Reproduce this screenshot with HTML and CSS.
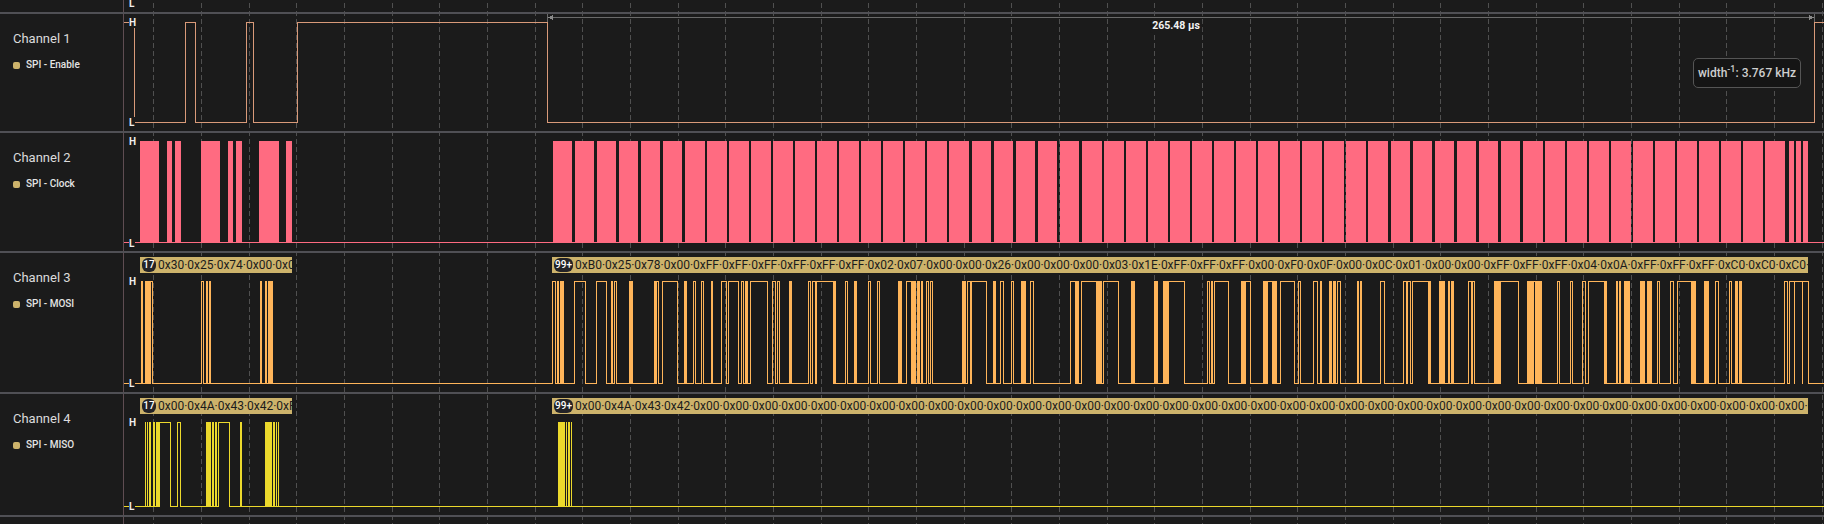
FILE: index.html
```html
<!DOCTYPE html>
<html lang="en">

<head>
  <meta charset="UTF-8">
  <meta name="viewport" content="width=device-width, initial-scale=1.0">
  <title>Logic capture - SPI</title>
  <link rel="stylesheet" href="styles.css">
</head>

<body>
  <div class="viewer">
    <div class="row strip">
      <div class="side"></div>
      <div class="plot"><span class="level strip-low">L</span></div>
    </div>

    <section class="row ch1">
      <div class="side">
        <div class="name">Channel 1</div>
        <div class="analyzer"><i class="dot"></i>SPI - Enable</div>
      </div>
      <div class="plot">
        <svg viewBox="124 14 1700 117" preserveAspectRatio="none">
          <path class="trace enable" d="M124 22.5H134.5V122.5H185.5V22.5H195.5V122.5H246.5V22.5H253.5V122.5H297.5V22.5H547.5V122.5H1814.5V22.5H1824" />
          <path class="span" d="M547.5 14V22M1814.5 14V22M548 17.5H1814" />
          <path class="span-head" d="M548 17.5L553 15V20ZM1814 17.5L1809 15V20Z" />
        </svg>
        <span class="level ch1-high">H</span>
        <span class="level ch1-low">L</span>
        <span class="span-label">265.48 µs</span>
        <div class="tooltip">width<sup>-1</sup>: 3.767 kHz</div>
      </div>
    </section>

    <section class="row ch2">
      <div class="side">
        <div class="name">Channel 2</div>
        <div class="analyzer"><i class="dot"></i>SPI - Clock</div>
      </div>
      <div class="plot">
        <svg viewBox="124 133 1700 118" preserveAspectRatio="none">
          <path class="trace clock" d="M124 242.5H1824" />
          <path class="bars clock-bars" d="M140 141H159V243H140ZM167 141H172V243H167ZM175 141H181V243H175ZM201 141H220V243H201ZM228 141H233V243H228ZM236 141H242V243H236ZM259 141H279V243H259ZM286 141H292V243H286Z
          M553 141H572V243H553ZM575 141H594V243H575ZM597 141H616V243H597ZM619 141H638V243H619ZM641 141H660V243H641ZM663 141H682V243H663ZM685 141H705V243H685ZM707 141H727V243H707ZM729 141H749V243H729ZM751 141H771V243H751ZM773 141H793V243H773ZM795 141H815V243H795ZM817 141H837V243H817ZM839 141H859V243H839ZM861 141H881V243H861ZM883 141H903V243H883ZM905 141H925V243H905ZM927 141H947V243H927ZM949 141H969V243H949Z
          M972 141H991V243H972ZM994 141H1013V243H994ZM1016 141H1035V243H1016ZM1038 141H1057V243H1038ZM1060 141H1079V243H1060ZM1082 141H1102V243H1082ZM1104 141H1124V243H1104ZM1126 141H1146V243H1126ZM1148 141H1168V243H1148ZM1170 141H1190V243H1170ZM1192 141H1212V243H1192ZM1214 141H1234V243H1214ZM1236 141H1256V243H1236ZM1258 141H1278V243H1258ZM1280 141H1300V243H1280ZM1302 141H1322V243H1302ZM1324 141H1344V243H1324ZM1346 141H1366V243H1346ZM1368 141H1388V243H1368Z
          M1391 141H1410V243H1391ZM1413 141H1432V243H1413ZM1435 141H1454V243H1435ZM1457 141H1476V243H1457ZM1479 141H1498V243H1479ZM1501 141H1520V243H1501ZM1523 141H1543V243H1523ZM1545 141H1565V243H1545ZM1567 141H1587V243H1567ZM1589 141H1609V243H1589ZM1611 141H1631V243H1611ZM1633 141H1653V243H1633ZM1655 141H1675V243H1655ZM1677 141H1697V243H1677ZM1699 141H1719V243H1699ZM1721 141H1741V243H1721ZM1743 141H1763V243H1743ZM1765 141H1785V243H1765ZM1789 141H1794V243H1789ZM1796 141H1801V243H1796ZM1803 141H1808V243H1803Z" />
        </svg>
        <span class="level ch2-high">H</span>
        <span class="level ch2-low">L</span>
      </div>
    </section>

    <section class="row ch3">
      <div class="side">
        <div class="name">Channel 3</div>
        <div class="analyzer"><i class="dot"></i>SPI - MOSI</div>
      </div>
      <div class="plot">
        <svg viewBox="124 253 1700 139" preserveAspectRatio="none">
          <path class="trace mosi" d="M124 383.5H150.5V281.5H152.5V383.5H201.5V281.5H203.5V383.5H206.5V281.5H207.5V383.5H209.5V281.5H210.5V383.5
          H552.5V281.5H555.5V383.5H574.5V281.5H585.5V383.5H596.5V281.5H606.5V383.5H611.5V281.5H612.5V383.5H614.5V281.5H616.5V383.5H654.5V281.5H655.5V383.5H656.5V281.5H658.5V383.5H662.5V281.5H677.5V383.5H693.5V281.5H695.5V383.5H701.5V281.5H703.5V383.5H711.5V281.5H712.5V383.5H721.5V281.5H726.5V383.5H728.5V281.5H738.5V383.5H741.5V281.5H743.5V383.5H750.5V281.5H767.5V383.5H772.5V281.5H775.5V383.5H777.5V281.5H779.5V383.5H808.5V281.5H810.5V383.5H812.5V281.5H815.5V383.5H816.5V281.5H833.5V383.5H845.5V281.5H847.5V383.5H868.5V281.5H870.5V383.5H877.5V281.5H879.5V383.5H906.5V281.5H911.5V383.5H926.5V281.5H928.5V383.5H930.5V281.5H932.5V383.5
          H967.5V281.5H970.5V383.5H971.5V281.5H986.5V383.5H1000.5V281.5H1003.5V383.5H1011.5V281.5H1013.5V383.5H1030.5V281.5H1033.5V383.5H1070.5V281.5H1075.5V383.5H1081.5V281.5H1096.5V383.5H1103.5V281.5H1118.5V383.5H1168.5V281.5H1184.5V383.5H1207.5V281.5H1209.5V383.5H1211.5V281.5H1212.5V383.5H1214.5V281.5H1228.5V383.5H1245.5V281.5H1250.5V383.5H1267.5V281.5H1272.5V383.5H1280.5V281.5H1294.5V383.5H1298.5V281.5H1300.5V383.5H1313.5V281.5H1317.5V383.5H1320.5V281.5H1321.5V383.5H1337.5V281.5H1340.5V383.5H1357.5V281.5H1358.5V383.5H1360.5V281.5H1361.5V383.5H1380.5V281.5H1384.5V383.5
          H1403.5V281.5H1406.5V383.5H1407.5V281.5H1410.5V383.5H1412.5V281.5H1428.5V383.5H1468.5V281.5H1471.5V383.5H1472.5V281.5H1474.5V383.5H1500.5V281.5H1518.5V383.5H1533.5V281.5H1535.5V383.5H1557.5V281.5H1559.5V383.5H1570.5V281.5H1572.5V383.5H1582.5V281.5H1585.5V383.5H1588.5V281.5H1604.5V383.5H1657.5V281.5H1659.5V383.5H1670.5V281.5H1673.5V383.5H1677.5V281.5H1691.5V383.5H1715.5V281.5H1718.5V383.5H1729.5V281.5H1731.5V383.5H1784.5V281.5H1787.5V383.5H1789.5V281.5H1808.5V383.5H1824M1794.5 281.5V383.5M1802.5 281.5V383.5" />
          <path class="bars mosi-bars" d="M141 281H143V384H141ZM145 281H150V384H145ZM260 281H262V384H260ZM265 281H267V384H265ZM268 281H273V384H268Z
          M557 281H559V384H557ZM560 281H564V384H560ZM629 281H633V384H629ZM684 281H687V384H684ZM745 281H748V384H745ZM789 281H792V384H789ZM834 281H836V384H834ZM854 281H857V384H854ZM898 281H902V384H898ZM912 281H916V384H912ZM917 281H920V384H917ZM921 281H923V384H921ZM962 281H966V384H962ZM993 281H996V384H993ZM1021 281H1026V384H1021ZM1075 281H1079V384H1075ZM1096 281H1102V384H1096ZM1131 281H1135V384H1131ZM1154 281H1158V384H1154ZM1163 281H1168V384H1163ZM1241 281H1245V384H1241ZM1263 281H1267V384H1263ZM1272 281H1277V384H1272ZM1329 281H1332V384H1329ZM1333 281H1336V384H1333ZM1428 281H1431V384H1428ZM1439 281H1445V384H1439ZM1448 281H1450V384H1448ZM1451 281H1454V384H1451ZM1494 281H1500V384H1494ZM1527 281H1533V384H1527ZM1536 281H1542V384H1536ZM1604 281H1607V384H1604ZM1616 281H1618V384H1616ZM1619 281H1621V384H1619ZM1624 281H1630V384H1624ZM1640 281H1645V384H1640ZM1647 281H1652V384H1647ZM1691 281H1696V384H1691ZM1704 281H1709V384H1704ZM1735 281H1738V384H1735ZM1739 281H1742V384H1739Z" />
        </svg>
        <span class="level ch3-high">H</span>
        <span class="level ch3-low">L</span>
        <div class="bubble bubble-short"><b class="count">17</b><span class="bytes">0x30·0x25·0x74·0x00·0x00</span></div>
        <div class="bubble bubble-long"><b class="count count-wide">99+</b><span class="bytes">0xB0·0x25·0x78·0x00·0xFF·0xFF·0xFF·0xFF·0xFF·0xFF·0x02·0x07·0x00·0x00·0x26·0x00·0x00·0x00·0x03·0x1E·0xFF·0xFF·0xFF·0x00·0xF0·0x0F·0x00·0x0C·0x01·0x00·0x00·0xFF·0xFF·0xFF·0x04·0x0A·0xFF·0xFF·0xFF·0xC0·0xC0·0xC0·</span></div>
      </div>
    </section>

    <section class="row ch4">
      <div class="side">
        <div class="name">Channel 4</div>
        <div class="analyzer"><i class="dot"></i>SPI - MISO</div>
      </div>
      <div class="plot">
        <svg viewBox="124 394 1700 121" preserveAspectRatio="none">
          <path class="trace miso" d="M124 506.5H159.5V422.5H170.5V506.5H177.5V422.5H180.5V506.5H218.5V422.5H229.5V506.5H240.5V422.5H241.5V506.5H1824" />
          <path class="bars miso-bars" d="M145 422H146V507H145ZM147 422H148V507H147ZM149 422H151V507H149ZM153 422H155V507H153ZM156 422H159V507H156ZM206 422H211V507H206ZM212 422H214V507H212ZM215 422H217V507H215ZM265 422H272V507H265ZM273 422H275V507H273ZM276 422H277V507H276ZM278 422H279V507H278ZM558 422H565V507H558ZM566 422H567V507H566ZM568 422H570V507H568ZM571 422H572V507H571Z" />
        </svg>
        <span class="level ch4-high">H</span>
        <span class="level ch4-low">L</span>
        <div class="bubble bubble-short"><b class="count">17</b><span class="bytes">0x00·0x4A·0x43·0x42·0xFF</span></div>
        <div class="bubble bubble-long"><b class="count count-wide">99+</b><span class="bytes">0x00·0x4A·0x43·0x42·0x00·0x00·0x00·0x00·0x00·0x00·0x00·0x00·0x00·0x00·0x00·0x00·0x00·0x00·0x00·0x00·0x00·0x00·0x00·0x00·0x00·0x00·0x00·0x00·0x00·0x00·0x00·0x00·0x00·0x00·0x00·0x00·0x00·0x00·0x00·0x00·0x00·0x00·0x00</span></div>
      </div>
    </section>

    <div class="row strip-bottom">
      <div class="side"></div>
      <div class="plot"></div>
    </div>
  </div>
</body>

</html>
```

FILE: styles.css
```css
* {
  box-sizing: border-box;
}

html,
body {
  margin: 0;
  height: 100%;
  overflow: hidden;
}

body {
  font-family: Roboto, "Liberation Sans", sans-serif;
  background-color: #1b1b1b;
}

/* the dashes are background stripes cut over the vertical time lines */
.viewer {
  display: grid;
  grid-template-rows: 12px 119px 120px 141px 123px 9px;
  height: 524px;
  background-color: #1b1b1b;
  background-image:
    linear-gradient(#1b1b1b 3px, transparent 3px),
    repeating-linear-gradient(90deg, transparent 0 10.29px, #505050 10.29px 11.29px, transparent 11.29px 47.67px);
  background-size: 100% 8px, 100% 100%;
}

.row {
  display: flex;
  min-height: 0;
}

.ch1,
.ch2,
.ch3,
.ch4,
.strip-bottom {
  border-top: 2px solid #505055;
}

.side {
  flex: 0 0 124px;
  padding: 17px 0 0 13px;
  background-color: #1b1b1b;
  border-right: 1px solid #5f4d52;
}

.name {
  color: #dcdcdc;
  font-size: 13px;
  line-height: 16px;
}

.analyzer {
  display: flex;
  align-items: center;
  gap: 6px;
  margin-top: 10px;
  color: #e4e4e4;
  font-size: 10px;
  font-weight: 500;
  line-height: 16px;
}

.dot {
  width: 7px;
  height: 7px;
  border-radius: 2px;
  background-color: #cdb36b;
}

.plot {
  position: relative;
  flex: 1;
  min-width: 0;
}

.plot svg {
  display: block;
  width: 100%;
  height: 100%;
  shape-rendering: crispEdges;
}

.trace {
  fill: none;
  stroke-width: 1;
}

.enable {
  stroke: #d99a79;
}

.clock {
  stroke: #ff6b81;
}

.clock-bars {
  fill: #ff6b81;
}

.mosi {
  stroke: #ffb55a;
}

.mosi-bars {
  fill: #ffb55a;
}

.miso {
  stroke: #ecd92c;
}

.miso-bars {
  fill: #ecd92c;
}

.span {
  fill: none;
  stroke: #6a6a6a;
}

.span-head {
  fill: #8a8a8a;
}

.span-label {
  position: absolute;
  top: 5px;
  left: 1052px;
  transform: translateX(-50%);
  padding: 0 2px;
  color: #f2f2f2;
  font-size: 10.5px;
  font-weight: 700;
  line-height: 14px;
  background-color: #1b1b1b;
  border-radius: 3px;
}

.tooltip {
  position: absolute;
  top: 44px;
  left: 1569px;
  width: 108px;
  height: 30px;
  color: #cfcfcf;
  font-size: 12px;
  font-weight: 500;
  line-height: 28px;
  text-align: center;
  white-space: nowrap;
  background-color: #151515;
  border: 1px solid #555;
  border-radius: 5px;
}

.tooltip sup {
  font-size: 9px;
  line-height: 0;
}

.level {
  position: absolute;
  left: 5px;
  padding: 0 1px 0 0;
  color: #eee;
  font-size: 10px;
  font-weight: 700;
  line-height: 11px;
  background-color: #1b1b1b;
}

.strip-low {
  top: -2px;
}

.ch1-high {
  top: 3px;
}

.ch1-low {
  top: 103px;
}

.ch2-high {
  top: 3px;
}

.ch2-low {
  top: 105px;
}

.ch3-high {
  top: 23px;
}

.ch3-low {
  top: 125px;
}

.ch4-high {
  top: 23px;
}

.ch4-low {
  top: 107px;
}

.bubble {
  position: absolute;
  top: 4px;
  display: flex;
  align-items: center;
  height: 16px;
  overflow: hidden;
  padding-left: 2px;
  gap: 2px;
  background-color: #cdb36b;
}

.bubble-short {
  left: 16px;
  width: 152px;
}

.bubble-long {
  left: 428px;
  width: 1256px;
}

.count {
  flex: none;
  width: 14px;
  height: 14px;
  color: #fff;
  font-size: 10px;
  font-weight: 500;
  line-height: 14px;
  text-align: center;
  background-color: #222226;
  border-radius: 6px;
}

.count-wide {
  width: 19px;
}

.bytes {
  color: #1b1b1b;
  font-size: 12px;
  line-height: 16px;
  white-space: nowrap;
}
```
